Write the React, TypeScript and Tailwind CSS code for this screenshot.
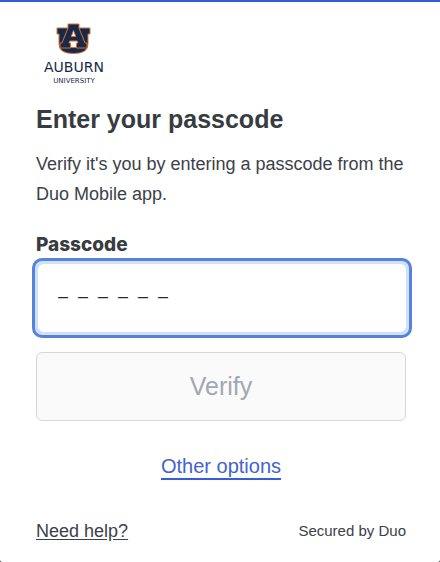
import React from "react";

function AuburnLogo() {
  return (
    <svg viewBox="0 0 78 62" className="h-[62px] w-[78px]" role="img" aria-label="Auburn University">
      {/* Interlocking monogram: U behind, A in front */}
      <g transform="translate(20 1)" fill="#16294a" stroke="#d9712f" strokeWidth="1">
        <path d="M1 5H12V11H10V20Q10 24.500 17.500 24.500T25 20V11H23V5H34V11H32V21Q32 30.500 17.500 30.500T3 21V11H1Z" />
        <path
          fillRule="evenodd"
          d="M12 1H23V5L29 20H31V25H20.500V20H22L21.400 18H13.600L13 20H14.500V25H4V20H6L12 5ZM17.500 7.500L15.200 13.500H19.800Z"
        />
      </g>
      <text x="38" y="50" textAnchor="middle" fontSize="14" fill="#16294a" className="font-['DejaVu_Sans',sans-serif]">
        AUBURN
      </text>
      <text x="38" y="61" textAnchor="middle" fontSize="7" fill="#16294a" className="font-['DejaVu_Sans',sans-serif]">
        UNIVERSITY
      </text>
    </svg>
  );
}

export default function App() {
  return (
    <div className="min-h-screen bg-[#202124]">
      <main className="flex min-h-screen flex-col rounded-b-xs border-t-2 border-[#355dd6] bg-white pt-5 pr-[34px] pb-[19px] pl-9 font-['Liberation_Sans',Arial,sans-serif] text-[#3b4148]">
        <header>
          <AuburnLogo />
        </header>

        <h1 className="mt-[19px] text-[25px] leading-8 font-bold text-[#363c40]">Enter your passcode</h1>
        <p className="mt-3.5 text-[18px] leading-[30px]">
          Verify it's you by entering a passcode from the Duo Mobile app.
        </p>

        <form className="mt-6" onSubmit={(e) => e.preventDefault()}>
          <label
            htmlFor="passcode"
            className="block font-['Inter',sans-serif] text-[19px] leading-6 font-extrabold text-[#363c40]"
          >
            Passcode
          </label>
          <div className="-mr-1.5 -ml-1 mt-px rounded-[10px] border-3 border-[#5682d8] bg-[#cfe0fb] p-[3px]">
            <input
              id="passcode"
              type="text"
              inputMode="numeric"
              autoComplete="one-time-code"
              placeholder="–  –  –  –  –  –"
              className="block h-[68px] w-full rounded-md bg-white px-5 pb-1 text-[18px] outline-none placeholder:text-[#25282c]"
            />
          </div>
          <button
            type="submit"
            disabled
            className="mt-3.5 block h-[69px] w-full rounded-md border border-[#d5d7da] bg-[#fafafa] text-[25px] text-[#a1a8b1]"
          >
            Verify
          </button>
        </form>

        <div className="mt-[33px] text-center">
          <a href="#options" className="inline-block border-b-2 border-[#355dd6] text-[20px] leading-6 text-[#4262d0]">
            Other options
          </a>
        </div>

        <footer className="mt-auto flex items-center justify-between">
          <a href="#help" className="text-[18px] leading-6 underline underline-offset-2">
            Need help?
          </a>
          <span className="text-[15px] leading-6">Secured by Duo</span>
        </footer>
      </main>
    </div>
  );
}
